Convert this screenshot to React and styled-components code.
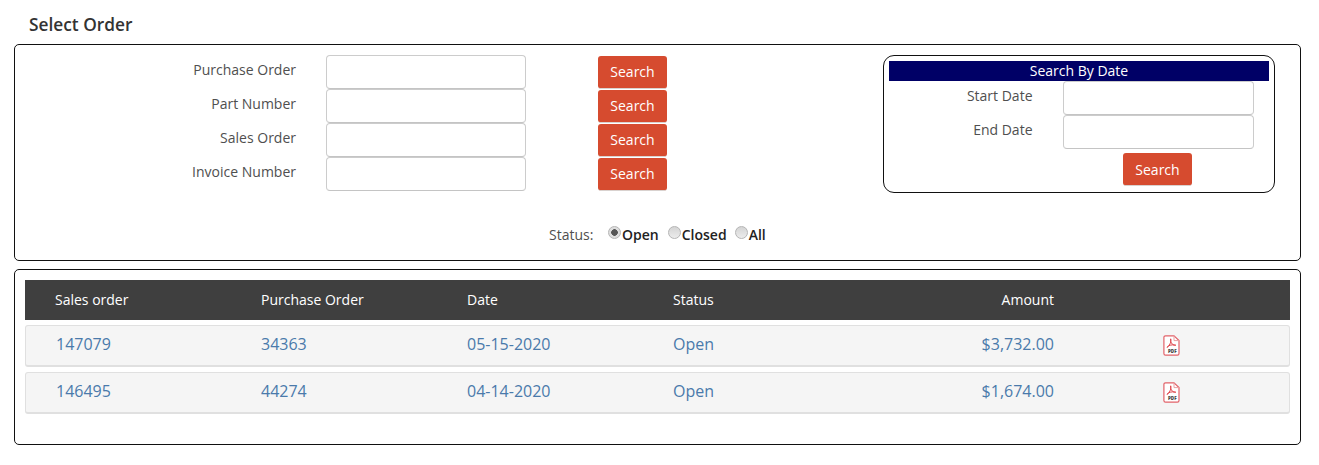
import React from "react";
import styled, { createGlobalStyle } from "styled-components";

const Global = createGlobalStyle`
  html, body { margin: 0; padding: 0; background: #fff; }
  body { font-family: "Open Sans", "Liberation Sans", sans-serif; color: #444; }
  * { box-sizing: border-box; }
`;

const Page = styled.div`
  width: 1319px;
  height: 465px;
  padding: 14px 18px 0 14px;
  overflow: hidden;
`;
const Title = styled.h1`
  margin: 0 0 9px 15px;
  height: 21px;
  font-size: 17.3px;
  line-height: 21px;
  font-weight: 600;
  color: #333;
`;
const Panel = styled.section`
  border: 1px solid #111;
  border-radius: 5px;
  height: ${(p) => p.$h}px;
  margin-bottom: 8px;
`;
const SearchPanel = styled(Panel)`
  padding-top: 10px;
  display: flex;
  flex-direction: column;
`;
const TopArea = styled.div`
  display: flex;
  align-items: flex-start;
  height: 163px;
`;
const FieldGrid = styled.div`
  display: grid;
  grid-template-columns: 281px 230px 141px;
  width: 652px;
`;
const FieldRow = styled.div`
  display: contents;
`;
const Label = styled.label`
  font-size: 14px;
  line-height: 30px;
  height: 34px;
  text-align: right;
  color: #4f4f4f;
`;
const TextInput = styled.input`
  display: block;
  width: ${(p) => p.$w}px;
  height: 34px;
  border: 1px solid #ccc;
  border-bottom-color: #c4c4c4;
  border-radius: 4px;
  background: #fff;
  padding: 0 8px;
`;
const InputCell = styled.div`
  margin-left: ${(p) => p.$ml || 0}px;
  height: 34px;
`;
const Button = styled.button`
  width: 69px;
  height: 33px;
  margin-top: 1px;
  padding: ${(p) => (p.$low ? "1px 0 0" : "0")};
  border: 0;
  border-bottom: 1px solid #d9d2cf;
  border-radius: 3px;
  background: #d64b2f;
  color: #fff;
  font-family: inherit;
  font-size: 14px;
  line-height: 30px;
`;
const RowButton = styled(Button)`
  margin-left: 72px;
`;
const DateBox = styled.div`
  width: 392px;
  height: 138px;
  margin-left: 216px;
  border: 1px solid #111;
  border-radius: 11px;
  padding: 5px;
`;
const DateHeader = styled.div`
  height: 20px;
  background: #000066;
  color: #fff;
  font-size: 14px;
  line-height: 20px;
  text-align: center;
`;
const DateGrid = styled.div`
  display: grid;
  grid-template-columns: 143.5px 191px;
  column-gap: 30.5px;
`;
const DateButtonRow = styled.div`
  display: flex;
  justify-content: flex-start;
  padding: 3px 0 0 234px;
`;
const StatusRow = styled.div`
  display: flex;
  align-items: center;
  height: 24px;
  margin: 4px 0 0 534px;
  font-size: 14px;
`;
const StatusLabel = styled.span`
  width: 59px;
  color: #4f4f4f;
`;
const RadioLabel = styled.label`
  display: inline-flex;
  align-items: center;
  font-weight: 600;
  color: #222;
  margin-right: ${(p) => p.$mr}px;
`;
const Radio = styled.span`
  width: 13px;
  height: 13px;
  margin: -3px 1px 0 0;
  border-radius: 50%;
  border: 1px solid #b5b5b5;
  background: ${(p) =>
    p.$on
      ? "radial-gradient(circle, #555 0 3px, #dedede 3.6px)"
      : "linear-gradient(#d4d4d4, #ececec)"};
`;
const TablePanel = styled(Panel)`
  padding: 10px 10px 0 10px;
`;
const columns = `
  display: grid;
  grid-template-columns: 206px 206px 206px 206px 177px 1fr;
  align-items: center;
`;
const HeadRow = styled.div`
  ${columns}
  height: 40px;
  padding: 0 0 2px 30px;
  background: #3f3f3f;
  color: #fff;
  font-size: 14px;
  margin-bottom: 5px;
`;
const AmountHead = styled.div`
  text-align: right;
  margin-right: 2px;
`;
const DataRow = styled.div`
  ${columns}
  height: 42px;
  padding-left: 29px;
  margin-bottom: 5px;
  background: #f5f5f5;
  border: 1px solid #e0e0e0;
  border-bottom-width: 2px;
  border-radius: 3px;
  color: #4a7aab;
  font-size: 16px;
`;
const Cell = styled.div`
  margin-left: ${(p) => p.$ml || 0}px;
  margin-top: -4px;
`;
const NumCell = styled(Cell)`
  width: 45px;
  text-align: right;
`;
const AmountCell = styled(Cell)`
  text-align: right;
  margin-right: 2px;
`;
const IconCell = styled.div`
  padding-left: 107px;
  height: 21px;
  margin-top: -1px;
`;
const PdfLabel = styled.text`
  font-family: "Open Sans", sans-serif;
  font-size: 4.5px;
  font-weight: 800;
  fill: #444;
`;

const PdfIcon = () => (
  <svg width="17" height="21" viewBox="0 0 17 21" fill="none">
    <path d="M2.5 .8H11L16 5.600V18.600a1.600 1.600 0 0 1-1.600 1.600H2.500A1.600 1.600 0 0 1 .9 18.600V2.400A1.600 1.600 0 0 1 2.500.8Z" fill="#fff" stroke="#e2636a" strokeWidth="1.2" />
    <path d="M11 .8V5.600H16" stroke="#e9a0a3" strokeWidth="1" />
    <path d="M7.700 3.800c-.6 2 .2 3.700 1.700 5.400 1 .9 2.300 1.200 3.400 1-1.800-.6-4.600-.5-6.900.5-.9.4-1.700 1.100-1.900 1.700 1.400-.4 3-3 3.700-5.300.3-1.300.4-2.500 0-3.300Z" stroke="#e0454c" strokeWidth="1" />
    <PdfLabel x="5" y="18">PDF</PdfLabel>
  </svg>
);

const fields = ["Purchase Order", "Part Number", "Sales Order", "Invoice Number"];
const rows = [
  ["147079", "34363", "05-15-2020", "Open", "$3,732.00"],
  ["146495", "44274", "04-14-2020", "Open", "$1,674.00"],
];

export default function App() {
  return (
    <Page>
      <Global />
      <Title>Select Order</Title>
      <SearchPanel $h={217}>
        <TopArea>
          <FieldGrid>
            {fields.map((f) => (
              <FieldRow key={f}>
                <Label>{f}</Label>
                <InputCell $ml={30}>
                  <TextInput $w={200} />
                </InputCell>
                <RowButton>Search</RowButton>
              </FieldRow>
            ))}
          </FieldGrid>
          <DateBox>
            <DateHeader>Search By Date</DateHeader>
            <DateGrid>
              <Label>Start Date</Label>
              <TextInput $w={191} />
              <Label>End Date</Label>
              <TextInput $w={191} />
            </DateGrid>
            <DateButtonRow>
              <Button $low>Search</Button>
            </DateButtonRow>
          </DateBox>
        </TopArea>
        <StatusRow>
          <StatusLabel>Status:</StatusLabel>
          <RadioLabel $mr={9}><Radio $on />Open</RadioLabel>
          <RadioLabel $mr={8}><Radio />Closed</RadioLabel>
          <RadioLabel $mr={0}><Radio />All</RadioLabel>
        </StatusRow>
      </SearchPanel>
      <TablePanel $h={176}>
        <HeadRow>
          <div>Sales order</div>
          <div>Purchase Order</div>
          <div>Date</div>
          <div>Status</div>
          <AmountHead>Amount</AmountHead>
          <div />
        </HeadRow>
        {rows.map((r) => (
          <DataRow key={r[0]}>
            <Cell $ml={1}>{r[0]}</Cell>
            <NumCell>{r[1]}</NumCell>
            <Cell>{r[2]}</Cell>
            <Cell>{r[3]}</Cell>
            <AmountCell>{r[4]}</AmountCell>
            <IconCell><PdfIcon /></IconCell>
          </DataRow>
        ))}
      </TablePanel>
    </Page>
  );
}
